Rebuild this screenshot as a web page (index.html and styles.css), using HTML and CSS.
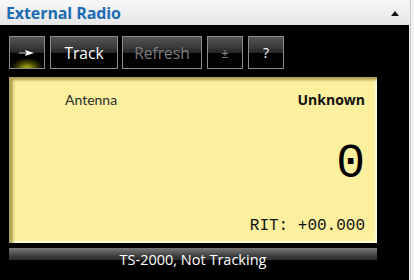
FILE: index.html
```html
<!DOCTYPE html>
<html>
<head>
<meta charset="utf-8">
<link rel="stylesheet" href="styles.css">
</head>
<body>
<div class="window">
  <div class="main">
    <header class="titlebar">
      <span class="title">External Radio</span>
      <svg class="caret" width="8" height="5" viewBox="0 0 8 5"><path d="M0 5 L4 0 L8 5 Z" fill="#111"/></svg>
    </header>
    <section class="panel">
      <div class="toolbar">
        <button class="btn btn-play"><svg width="16" height="8" viewBox="0 0 16 8"><path d="M0 3.6 H7 V4.4 H0 Z" fill="#fff"/><path d="M6 1 L15 4 L6 7 L7.5 4 Z" fill="#fff"/></svg></button>
        <button class="btn btn-track">Track</button>
        <button class="btn btn-refresh">Refresh</button>
        <button class="btn btn-pm">±</button>
        <button class="btn btn-help">?</button>
      </div>
      <div class="display">
        <div class="row-top">
          <span class="antenna">Antenna</span>
          <span class="mode">Unknown</span>
        </div>
        <div class="freq">0</div>
        <div class="rit">RIT: +00.000</div>
      </div>
      <div class="status"><span>TS-2000, Not Tracking</span></div>
    </section>
  </div>
  <div class="edge"></div>
</div>
</body>
</html>
```
FILE: styles.css
```css
html, body {
  margin: 0;
  padding: 0;
  width: 414px;
  height: 280px;
  overflow: hidden;
  background: #000;
}
.window {
  display: flex;
  width: 414px;
  height: 280px;
}
.main {
  width: 409px;
  display: flex;
  flex-direction: column;
}
.edge {
  width: 5px;
  background: linear-gradient(to right, #eeeeee 0 1px, #c9c9c9 1px 2px, #f3f3f3 2px);
}
.titlebar {
  height: 25px;
  box-sizing: border-box;
  display: flex;
  align-items: center;
  justify-content: space-between;
  padding: 0 10px 0 6px;
  background: linear-gradient(to bottom, #f7f7f7, #e6e6e6);
}
.title {
  font-family: "Open Sans", sans-serif;
  font-weight: 700;
  font-size: 16px;
  color: #1b6cb4;
  letter-spacing: -0.1px;
}
.caret { margin-top: 1px; }
.panel {
  flex: 1;
  background: #000;
  padding: 11px 0 0 9px;
  display: flex;
  flex-direction: column;
}
.toolbar {
  display: flex;
  height: 33px;
}
.btn {
  box-sizing: border-box;
  height: 33px;
  margin: 0;
  padding: 0;
  border: 1px solid #8c8c8c;
  background: linear-gradient(to bottom, #555 0%, #3c3c3c 30%, #262626 50%, #000 52%, #050505 100%);
  color: #fff;
  font-family: "Open Sans", sans-serif;
  font-size: 15.5px;
  display: flex;
  align-items: center;
  justify-content: center;
}
.btn-play {
  width: 36px;
  background:
    radial-gradient(ellipse 16px 10px at 50% 100%, rgba(210, 210, 20, 0.85), rgba(150, 150, 0, 0.4) 60%, rgba(0,0,0,0) 100%),
    linear-gradient(to bottom, #555 0%, #3c3c3c 30%, #262626 50%, #000 52%, #050505 100%);
}
.btn-play svg { margin-top: 1px; }
.btn-track { width: 68px; margin-left: 5px; }
.btn-refresh { width: 80px; margin-left: 4px; color: #7b7b7b; }
.btn-pm { width: 36px; margin-left: 5px; color: #8a8a8a; font-size: 13px; }
.btn-help { width: 36px; margin-left: 5px; font-size: 14px; }
.display {
  box-sizing: border-box;
  width: 368px;
  height: 166px;
  margin-top: 8px;
  background: #fcf09f;
  box-shadow: inset 4px 3px 3px rgba(110, 95, 20, 0.55), inset -2px -2px 2px rgba(255, 255, 240, 0.7);
  padding: 13px 12px 0 56px;
  display: flex;
  flex-direction: column;
}
.row-top {
  display: flex;
  justify-content: space-between;
  align-items: baseline;
  height: 20px;
}
.antenna {
  font-family: Lato, sans-serif;
  font-size: 14px;
  color: #2b2b2b;
}
.mode {
  font-family: "Open Sans", sans-serif;
  font-weight: 700;
  font-size: 14px;
  color: #111;
}
.freq {
  font-family: "Liberation Mono", monospace;
  font-size: 48px;
  line-height: 56px;
  text-align: right;
  margin-top: 26px;
  color: #000;
}
.rit {
  font-family: "Liberation Mono", monospace;
  font-size: 16px;
  line-height: 20px;
  text-align: right;
  margin-top: 24px;
  color: #111;
}
.status {
  width: 368px;
  height: 12px;
  margin-top: 5px;
  background: linear-gradient(to bottom, #7a7a7a, #3a3a3a 70%, #2c2c2c);
  text-align: center;
  position: relative;
}
.status span {
  position: absolute;
  left: 0;
  right: 0;
  top: 2px;
  font-family: "Open Sans", sans-serif;
  font-size: 14.5px;
  line-height: 20px;
  color: #fff;
}
```
